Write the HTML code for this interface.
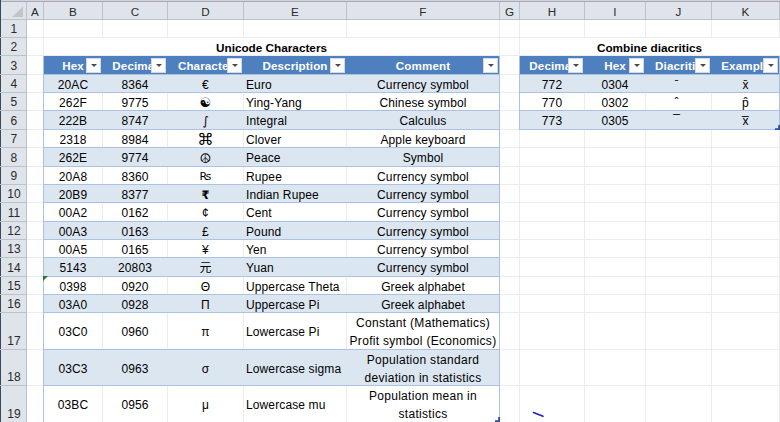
<!DOCTYPE html>
<html><head><meta charset="utf-8"><title>Unicode Characters</title>
<style>
html,body{margin:0;padding:0;background:#fff;}
body{width:780px;height:422px;overflow:hidden;position:relative;font-family:"Liberation Sans","DejaVu Sans","Noto Sans CJK SC",sans-serif;font-size:12px;letter-spacing:0.12px;color:#000;}
#s{position:absolute;left:0;top:0;width:780px;height:422px;overflow:hidden;background:#fff;}
#s div{position:absolute;box-sizing:border-box;}
.hb{background:#dfe4eb;}
.hl{background:#bcc2ca;}
.g{background:#eaecf0;}
.ch{color:#2a2a2a;text-align:center;font-size:11.7px;line-height:20px;top:2px;height:17px;}
.rh{color:#2a2a2a;text-align:center;font-size:12px;left:1.5px;width:25px;}
.th{background:#4e80bf;color:#fff;font-weight:bold;font-size:11.6px;text-align:center;white-space:nowrap;overflow:hidden;}
.fb{background:#fdfdfd;border:1px solid #d4dae4;width:15px;height:15px;}
.fb i{position:absolute;left:4px;top:5px;width:0;height:0;border-left:3px solid transparent;border-right:3px solid transparent;border-top:3.5px solid #4a4a4a;}
.band{background:#dce6f1;}
.bl{background:#abc3e2;}
.c{white-space:nowrap;text-align:center;}
.l{white-space:nowrap;text-align:left;}
.t{font-weight:bold;font-size:11.75px;letter-spacing:0;text-align:center;white-space:nowrap;color:#000;}
.sym{font-family:"DejaVu Sans","Liberation Sans","Noto Sans CJK SC",sans-serif;}
</style></head><body><div id="s">

<div class="g" style="left:27px;top:37px;width:753px;height:1px"></div>
<div class="g" style="left:27px;top:55px;width:753px;height:1px"></div>
<div class="g" style="left:27px;top:74px;width:753px;height:1px"></div>
<div class="g" style="left:27px;top:92px;width:753px;height:1px"></div>
<div class="g" style="left:27px;top:110px;width:753px;height:1px"></div>
<div class="g" style="left:27px;top:129px;width:753px;height:1px"></div>
<div class="g" style="left:27px;top:147px;width:753px;height:1px"></div>
<div class="g" style="left:27px;top:166px;width:753px;height:1px"></div>
<div class="g" style="left:27px;top:184px;width:753px;height:1px"></div>
<div class="g" style="left:27px;top:202px;width:753px;height:1px"></div>
<div class="g" style="left:27px;top:221px;width:753px;height:1px"></div>
<div class="g" style="left:27px;top:239px;width:753px;height:1px"></div>
<div class="g" style="left:27px;top:257px;width:753px;height:1px"></div>
<div class="g" style="left:27px;top:276px;width:753px;height:1px"></div>
<div class="g" style="left:27px;top:294px;width:753px;height:1px"></div>
<div class="g" style="left:27px;top:312px;width:753px;height:1px"></div>
<div class="g" style="left:27px;top:349px;width:753px;height:1px"></div>
<div class="g" style="left:27px;top:385px;width:753px;height:1px"></div>
<div class="g" style="left:43px;top:20px;width:1px;height:402px"></div>
<div class="g" style="left:102px;top:20px;width:1px;height:402px"></div>
<div class="g" style="left:167px;top:20px;width:1px;height:402px"></div>
<div class="g" style="left:243px;top:20px;width:1px;height:402px"></div>
<div class="g" style="left:346px;top:20px;width:1px;height:402px"></div>
<div class="g" style="left:499px;top:20px;width:1px;height:402px"></div>
<div class="g" style="left:519px;top:20px;width:1px;height:402px"></div>
<div class="g" style="left:584px;top:20px;width:1px;height:402px"></div>
<div class="g" style="left:645px;top:20px;width:1px;height:402px"></div>
<div class="g" style="left:711px;top:20px;width:1px;height:402px"></div>
<div class="g" style="left:779px;top:20px;width:1px;height:402px"></div>
<div style="left:44px;top:38px;width:455px;height:17px;background:#fff"></div>
<div style="left:520px;top:38px;width:260px;height:17px;background:#fff"></div>
<div style="left:0;top:0;width:780px;height:1px;background:#d2d2de"></div>
<div style="left:0;top:1px;width:780px;height:1px;background:#a9abb0"></div>
<div class="hb" style="left:0;top:2px;width:780px;height:17px"></div>
<div class="hl" style="left:0;top:19px;width:780px;height:1px"></div>
<div class="hb" style="left:0;top:20px;width:26px;height:402px"></div>
<div class="hl" style="left:26px;top:2px;width:1px;height:420px"></div>
<div style="left:0;top:0;width:1px;height:422px;background:#3a4a5a"></div>
<svg style="position:absolute;left:11px;top:6px" width="13" height="12" viewBox="0 0 13 12"><path d="M12 0.5 L12 11 L1 11 Z" fill="#bfc5cb"/></svg>
<div class="ch" style="left:27px;width:16px">A</div>
<div class="hl" style="left:43px;top:2px;width:1px;height:17px"></div>
<div class="ch" style="left:44px;width:58px">B</div>
<div class="hl" style="left:102px;top:2px;width:1px;height:17px"></div>
<div class="ch" style="left:103px;width:64px">C</div>
<div class="hl" style="left:167px;top:2px;width:1px;height:17px"></div>
<div class="ch" style="left:168px;width:75px">D</div>
<div class="hl" style="left:243px;top:2px;width:1px;height:17px"></div>
<div class="ch" style="left:244px;width:102px">E</div>
<div class="hl" style="left:346px;top:2px;width:1px;height:17px"></div>
<div class="ch" style="left:347px;width:152px">F</div>
<div class="hl" style="left:499px;top:2px;width:1px;height:17px"></div>
<div class="ch" style="left:500px;width:19px">G</div>
<div class="hl" style="left:519px;top:2px;width:1px;height:17px"></div>
<div class="ch" style="left:520px;width:64px">H</div>
<div class="hl" style="left:584px;top:2px;width:1px;height:17px"></div>
<div class="ch" style="left:585px;width:60px">I</div>
<div class="hl" style="left:645px;top:2px;width:1px;height:17px"></div>
<div class="ch" style="left:646px;width:65px">J</div>
<div class="hl" style="left:711px;top:2px;width:1px;height:17px"></div>
<div class="ch" style="left:712px;width:67px">K</div>
<div class="hl" style="left:779px;top:2px;width:1px;height:17px"></div>
<div class="hl" style="left:0;top:37px;width:26px;height:1px"></div>
<div class="rh" style="top:19px;height:18px;line-height:21px">1</div>
<div class="hl" style="left:0;top:55px;width:26px;height:1px"></div>
<div class="rh" style="top:37px;height:18px;line-height:21px">2</div>
<div class="hl" style="left:0;top:74px;width:26px;height:1px"></div>
<div class="rh" style="top:56px;height:18px;line-height:21px">3</div>
<div class="hl" style="left:0;top:92px;width:26px;height:1px"></div>
<div class="rh" style="top:74px;height:18px;line-height:21px">4</div>
<div class="hl" style="left:0;top:110px;width:26px;height:1px"></div>
<div class="rh" style="top:92px;height:18px;line-height:21px">5</div>
<div class="hl" style="left:0;top:129px;width:26px;height:1px"></div>
<div class="rh" style="top:111px;height:18px;line-height:21px">6</div>
<div class="hl" style="left:0;top:147px;width:26px;height:1px"></div>
<div class="rh" style="top:129px;height:18px;line-height:21px">7</div>
<div class="hl" style="left:0;top:166px;width:26px;height:1px"></div>
<div class="rh" style="top:148px;height:18px;line-height:21px">8</div>
<div class="hl" style="left:0;top:184px;width:26px;height:1px"></div>
<div class="rh" style="top:166px;height:18px;line-height:21px">9</div>
<div class="hl" style="left:0;top:202px;width:26px;height:1px"></div>
<div class="rh" style="top:184px;height:18px;line-height:21px">10</div>
<div class="hl" style="left:0;top:221px;width:26px;height:1px"></div>
<div class="rh" style="top:203px;height:18px;line-height:21px">11</div>
<div class="hl" style="left:0;top:239px;width:26px;height:1px"></div>
<div class="rh" style="top:221px;height:18px;line-height:21px">12</div>
<div class="hl" style="left:0;top:257px;width:26px;height:1px"></div>
<div class="rh" style="top:239px;height:18px;line-height:21px">13</div>
<div class="hl" style="left:0;top:276px;width:26px;height:1px"></div>
<div class="rh" style="top:258px;height:18px;line-height:21px">14</div>
<div class="hl" style="left:0;top:294px;width:26px;height:1px"></div>
<div class="rh" style="top:276px;height:18px;line-height:21px">15</div>
<div class="hl" style="left:0;top:312px;width:26px;height:1px"></div>
<div class="rh" style="top:294px;height:18px;line-height:21px">16</div>
<div class="hl" style="left:0;top:349px;width:26px;height:1px"></div>
<div class="rh" style="top:331px;height:18px;line-height:21px">17</div>
<div class="hl" style="left:0;top:385px;width:26px;height:1px"></div>
<div class="rh" style="top:367px;height:18px;line-height:21px">18</div>
<div class="rh" style="top:404px;height:18px;line-height:21px">19</div>
<div class="t" style="left:44px;top:38px;width:455px;height:18px;line-height:20px">Unicode Characters</div>
<div class="t" style="left:520px;top:38px;width:259px;height:18px;line-height:20px">Combine diacritics</div>
<div style="left:43px;top:56px;width:457px;height:19px;background:#4e80bf"></div>
<div class="th" style="left:44px;top:56px;width:58px;height:19px;line-height:19px">Hex</div>
<div class="fb" style="left:86px;top:58px"><i></i></div>
<div class="th" style="left:103px;top:56px;width:64px;height:19px;line-height:19px">Decimal</div>
<div class="fb" style="left:151px;top:58px"><i></i></div>
<div class="th" style="left:168px;top:56px;width:75px;height:19px;line-height:19px">Character</div>
<div class="fb" style="left:227px;top:58px"><i></i></div>
<div class="th" style="left:244px;top:56px;width:102px;height:19px;line-height:19px">Description</div>
<div class="fb" style="left:330px;top:58px"><i></i></div>
<div class="th" style="left:347px;top:56px;width:152px;height:19px;line-height:19px">Comment</div>
<div class="fb" style="left:483px;top:58px"><i></i></div>
<div class="band" style="left:43px;top:74px;width:457px;height:19px"></div>
<div class="bl" style="left:43px;top:74px;width:457px;height:1px"></div>
<div class="bl" style="left:43px;top:92px;width:457px;height:1px"></div>
<div class="c" style="left:44px;top:75px;width:58px;height:17px;line-height:20px;">20AC</div>
<div class="c" style="left:103px;top:75px;width:64px;height:17px;line-height:20px;">8364</div>
<div class="c" style="left:168px;top:75px;width:75px;height:17px;line-height:20px;">€</div>
<div class="l" style="left:244px;top:75px;width:102px;height:17px;line-height:20px;padding-left:2px;">Euro</div>
<div class="c" style="left:347px;top:75px;width:152px;height:17px;line-height:20px;">Currency symbol</div>
<div class="c" style="left:44px;top:93px;width:58px;height:17px;line-height:20px;">262F</div>
<div class="c" style="left:103px;top:93px;width:64px;height:17px;line-height:20px;">9775</div>
<div class="c sym" style="left:168px;top:93px;width:75px;height:17px;line-height:20px;font-size:13px;">☯</div>
<div class="l" style="left:244px;top:93px;width:102px;height:17px;line-height:20px;padding-left:2px;">Ying-Yang</div>
<div class="c" style="left:347px;top:93px;width:152px;height:17px;line-height:20px;">Chinese symbol</div>
<div class="band" style="left:43px;top:110px;width:457px;height:20px"></div>
<div class="bl" style="left:43px;top:110px;width:457px;height:1px"></div>
<div class="bl" style="left:43px;top:129px;width:457px;height:1px"></div>
<div class="c" style="left:44px;top:111px;width:58px;height:18px;line-height:21px;">222B</div>
<div class="c" style="left:103px;top:111px;width:64px;height:18px;line-height:21px;">8747</div>
<div class="c sym" style="left:168px;top:111px;width:75px;height:18px;line-height:21px;">∫</div>
<div class="l" style="left:244px;top:111px;width:102px;height:18px;line-height:21px;padding-left:2px;">Integral</div>
<div class="c" style="left:347px;top:111px;width:152px;height:18px;line-height:21px;">Calculus</div>
<div class="c" style="left:44px;top:130px;width:58px;height:17px;line-height:20px;">2318</div>
<div class="c" style="left:103px;top:130px;width:64px;height:17px;line-height:20px;">8984</div>
<div class="c sym" style="left:168px;top:130px;width:75px;height:17px;line-height:20px;font-size:16.5px;">⌘</div>
<div class="l" style="left:244px;top:130px;width:102px;height:17px;line-height:20px;padding-left:2px;">Clover</div>
<div class="c" style="left:347px;top:130px;width:152px;height:17px;line-height:20px;">Apple keyboard</div>
<div class="band" style="left:43px;top:147px;width:457px;height:20px"></div>
<div class="bl" style="left:43px;top:147px;width:457px;height:1px"></div>
<div class="bl" style="left:43px;top:166px;width:457px;height:1px"></div>
<div class="c" style="left:44px;top:148px;width:58px;height:18px;line-height:21px;">262E</div>
<div class="c" style="left:103px;top:148px;width:64px;height:18px;line-height:21px;">9774</div>
<div class="c sym" style="left:168px;top:148px;width:75px;height:18px;line-height:21px;font-size:13px;font-weight:bold;">☮</div>
<div class="l" style="left:244px;top:148px;width:102px;height:18px;line-height:21px;padding-left:2px;">Peace</div>
<div class="c" style="left:347px;top:148px;width:152px;height:18px;line-height:21px;">Symbol</div>
<div class="c" style="left:44px;top:167px;width:58px;height:17px;line-height:20px;">20A8</div>
<div class="c" style="left:103px;top:167px;width:64px;height:17px;line-height:20px;">8360</div>
<div class="c sym" style="left:168px;top:167px;width:75px;height:17px;line-height:20px;font-size:11px;">₨</div>
<div class="l" style="left:244px;top:167px;width:102px;height:17px;line-height:20px;padding-left:2px;">Rupee</div>
<div class="c" style="left:347px;top:167px;width:152px;height:17px;line-height:20px;">Currency symbol</div>
<div class="band" style="left:43px;top:184px;width:457px;height:19px"></div>
<div class="bl" style="left:43px;top:184px;width:457px;height:1px"></div>
<div class="bl" style="left:43px;top:202px;width:457px;height:1px"></div>
<div class="c" style="left:44px;top:185px;width:58px;height:17px;line-height:20px;">20B9</div>
<div class="c" style="left:103px;top:185px;width:64px;height:17px;line-height:20px;">8377</div>
<div class="c sym" style="left:168px;top:185px;width:75px;height:17px;line-height:20px;font-size:11.5px;font-weight:bold;">₹</div>
<div class="l" style="left:244px;top:185px;width:102px;height:17px;line-height:20px;padding-left:2px;">Indian Rupee</div>
<div class="c" style="left:347px;top:185px;width:152px;height:17px;line-height:20px;">Currency symbol</div>
<div class="c" style="left:44px;top:203px;width:58px;height:18px;line-height:21px;">00A2</div>
<div class="c" style="left:103px;top:203px;width:64px;height:18px;line-height:21px;">0162</div>
<div class="c" style="left:168px;top:203px;width:75px;height:18px;line-height:21px;">¢</div>
<div class="l" style="left:244px;top:203px;width:102px;height:18px;line-height:21px;padding-left:2px;">Cent</div>
<div class="c" style="left:347px;top:203px;width:152px;height:18px;line-height:21px;">Currency symbol</div>
<div class="band" style="left:43px;top:221px;width:457px;height:19px"></div>
<div class="bl" style="left:43px;top:221px;width:457px;height:1px"></div>
<div class="bl" style="left:43px;top:239px;width:457px;height:1px"></div>
<div class="c" style="left:44px;top:222px;width:58px;height:17px;line-height:20px;">00A3</div>
<div class="c" style="left:103px;top:222px;width:64px;height:17px;line-height:20px;">0163</div>
<div class="c" style="left:168px;top:222px;width:75px;height:17px;line-height:20px;">£</div>
<div class="l" style="left:244px;top:222px;width:102px;height:17px;line-height:20px;padding-left:2px;">Pound</div>
<div class="c" style="left:347px;top:222px;width:152px;height:17px;line-height:20px;">Currency symbol</div>
<div class="c" style="left:44px;top:240px;width:58px;height:17px;line-height:20px;">00A5</div>
<div class="c" style="left:103px;top:240px;width:64px;height:17px;line-height:20px;">0165</div>
<div class="c" style="left:168px;top:240px;width:75px;height:17px;line-height:20px;">¥</div>
<div class="l" style="left:244px;top:240px;width:102px;height:17px;line-height:20px;padding-left:2px;">Yen</div>
<div class="c" style="left:347px;top:240px;width:152px;height:17px;line-height:20px;">Currency symbol</div>
<div class="band" style="left:43px;top:257px;width:457px;height:20px"></div>
<div class="bl" style="left:43px;top:257px;width:457px;height:1px"></div>
<div class="bl" style="left:43px;top:276px;width:457px;height:1px"></div>
<div class="c" style="left:44px;top:258px;width:58px;height:18px;line-height:21px;">5143</div>
<div class="c" style="left:103px;top:258px;width:64px;height:18px;line-height:21px;">20803</div>
<div class="c" style="left:168px;top:258px;width:75px;height:18px;line-height:21px;">元</div>
<div class="l" style="left:244px;top:258px;width:102px;height:18px;line-height:21px;padding-left:2px;">Yuan</div>
<div class="c" style="left:347px;top:258px;width:152px;height:18px;line-height:21px;">Currency symbol</div>
<div class="c" style="left:44px;top:277px;width:58px;height:17px;line-height:20px;">0398</div>
<div class="c" style="left:103px;top:277px;width:64px;height:17px;line-height:20px;">0920</div>
<div class="c" style="left:168px;top:277px;width:75px;height:17px;line-height:20px;">Θ</div>
<div class="l" style="left:244px;top:277px;width:102px;height:17px;line-height:20px;padding-left:2px;">Uppercase Theta</div>
<div class="c" style="left:347px;top:277px;width:152px;height:17px;line-height:20px;">Greek alphabet</div>
<div class="band" style="left:43px;top:294px;width:457px;height:19px"></div>
<div class="bl" style="left:43px;top:294px;width:457px;height:1px"></div>
<div class="bl" style="left:43px;top:312px;width:457px;height:1px"></div>
<div class="c" style="left:44px;top:295px;width:58px;height:17px;line-height:20px;">03A0</div>
<div class="c" style="left:103px;top:295px;width:64px;height:17px;line-height:20px;">0928</div>
<div class="c" style="left:168px;top:295px;width:75px;height:17px;line-height:20px;">Π</div>
<div class="l" style="left:244px;top:295px;width:102px;height:17px;line-height:20px;padding-left:2px;">Uppercase Pi</div>
<div class="c" style="left:347px;top:295px;width:152px;height:17px;line-height:20px;">Greek alphabet</div>
<div class="c" style="left:44px;top:313px;width:58px;height:36px;line-height:39px;">03C0</div>
<div class="c" style="left:103px;top:313px;width:64px;height:36px;line-height:39px;">0960</div>
<div class="c" style="left:168px;top:313px;width:75px;height:36px;line-height:39px;">π</div>
<div class="l" style="left:244px;top:313px;width:102px;height:36px;line-height:39px;padding-left:2px;">Lowercase Pi</div>
<div class="c" style="left:347px;top:313px;width:152px;height:36px;line-height:18.3px;padding-top:1px;letter-spacing:0.3px">Constant (Mathematics)<br>Profit symbol (Economics)</div>
<div class="band" style="left:43px;top:349px;width:457px;height:37px"></div>
<div class="bl" style="left:43px;top:349px;width:457px;height:1px"></div>
<div class="bl" style="left:43px;top:385px;width:457px;height:1px"></div>
<div class="c" style="left:44px;top:350px;width:58px;height:35px;line-height:38px;">03C3</div>
<div class="c" style="left:103px;top:350px;width:64px;height:35px;line-height:38px;">0963</div>
<div class="c" style="left:168px;top:350px;width:75px;height:35px;line-height:38px;">σ</div>
<div class="l" style="left:244px;top:350px;width:102px;height:35px;line-height:38px;padding-left:2px;">Lowercase sigma</div>
<div class="c" style="left:347px;top:350px;width:152px;height:35px;line-height:18.3px;padding-top:1px;letter-spacing:0.3px">Population standard<br>deviation in statistics</div>
<div class="c" style="left:44px;top:386px;width:58px;height:36px;line-height:39px;">03BC</div>
<div class="c" style="left:103px;top:386px;width:64px;height:36px;line-height:39px;">0956</div>
<div class="c" style="left:168px;top:386px;width:75px;height:36px;line-height:39px;">μ</div>
<div class="l" style="left:244px;top:386px;width:102px;height:36px;line-height:39px;padding-left:2px;">Lowercase mu</div>
<div class="c" style="left:347px;top:386px;width:152px;height:36px;line-height:18.3px;padding-top:1px;letter-spacing:0.3px">Population mean in<br>statistics</div>
<div class="bl" style="left:43px;top:56px;width:1px;height:367px"></div>
<div class="bl" style="left:499px;top:56px;width:1px;height:367px"></div>
<svg style="position:absolute;left:495px;top:417px" width="5" height="5" viewBox="0 0 5 5"><path d="M5 0 L5 5 L0 5 L0 3.2 L3.2 3.2 L3.2 0 Z" fill="#2f4fa0"/></svg>
<div style="left:519px;top:56px;width:261px;height:19px;background:#4e80bf"></div>
<div class="th" style="left:520px;top:56px;width:64px;height:19px;line-height:19px">Decimal</div>
<div class="fb" style="left:568px;top:58px"><i></i></div>
<div class="th" style="left:585px;top:56px;width:60px;height:19px;line-height:19px">Hex</div>
<div class="fb" style="left:629px;top:58px"><i></i></div>
<div class="th" style="left:646px;top:56px;width:65px;height:19px;line-height:19px">Diacritic</div>
<div class="fb" style="left:695px;top:58px"><i></i></div>
<div class="th" style="left:712px;top:56px;width:67px;height:19px;line-height:19px">Example</div>
<div class="fb" style="left:763px;top:58px"><i></i></div>
<div class="band" style="left:519px;top:74px;width:261px;height:19px"></div>
<div class="bl" style="left:519px;top:74px;width:261px;height:1px"></div>
<div class="bl" style="left:519px;top:92px;width:261px;height:1px"></div>
<div class="c" style="left:520px;top:75px;width:64px;height:17px;line-height:20px;">772</div>
<div class="c" style="left:585px;top:75px;width:60px;height:17px;line-height:20px;">0304</div>
<div class="c" style="left:646px;top:75px;width:65px;height:17px;line-height:20px;padding-right:7px;">&nbsp;&#x0304;</div>
<div class="c" style="left:712px;top:75px;width:67px;height:17px;line-height:20px;">x&#x0304;</div>
<div class="c" style="left:520px;top:93px;width:64px;height:17px;line-height:20px;">770</div>
<div class="c" style="left:585px;top:93px;width:60px;height:17px;line-height:20px;">0302</div>
<div class="c" style="left:646px;top:93px;width:65px;height:17px;line-height:20px;padding-right:7px;">&nbsp;&#x0302;</div>
<div class="c" style="left:712px;top:93px;width:67px;height:17px;line-height:20px;">p&#x0302;</div>
<div class="band" style="left:519px;top:110px;width:261px;height:20px"></div>
<div class="bl" style="left:519px;top:110px;width:261px;height:1px"></div>
<div class="bl" style="left:519px;top:129px;width:261px;height:1px"></div>
<div class="c" style="left:520px;top:111px;width:64px;height:18px;line-height:21px;">773</div>
<div class="c" style="left:585px;top:111px;width:60px;height:18px;line-height:21px;">0305</div>
<div class="c" style="left:646px;top:111px;width:65px;height:18px;line-height:21px;padding-right:7px;">&nbsp;&#x0305;</div>
<div class="c" style="left:712px;top:111px;width:67px;height:18px;line-height:21px;">x&#x0305;</div>
<div class="bl" style="left:519px;top:56px;width:1px;height:74px"></div>
<div class="bl" style="left:779px;top:56px;width:1px;height:74px"></div>
<div class="bl" style="left:519px;top:129px;width:261px;height:1px"></div>
<svg style="position:absolute;left:775px;top:125px" width="5" height="5" viewBox="0 0 5 5"><path d="M5 0 L5 5 L0 5 L0 3.2 L3.2 3.2 L3.2 0 Z" fill="#2f4fa0"/></svg>
<svg style="position:absolute;left:43px;top:276px" width="5" height="5" viewBox="0 0 5 5"><path d="M0 0 L5 0 L0 5 Z" fill="#1e7a3c"/></svg>
<svg style="position:absolute;left:531px;top:410px" width="14" height="9" viewBox="0 0 14 9"><path d="M2.5 2.5 L12 6.3" stroke="#1f1fd0" stroke-width="1.6" stroke-linecap="round" fill="none"/></svg>
</div></body></html>
